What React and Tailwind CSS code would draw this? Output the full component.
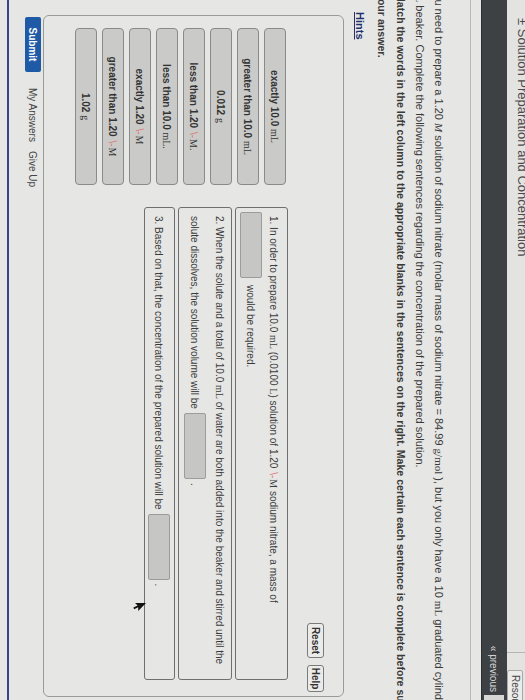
import React from 'react';

// The reference is a photo of a landscape page stored sideways,
// so the page is laid out at 700x525 and turned 90deg clockwise.

const Serif = ({ children, italic }) => (
  <span className={`font-['Liberation_Serif',serif] font-normal ${italic ? 'italic' : ''}`}>{children}</span>
);

const Glitch = () => (
  <span className="font-normal text-[#e07070] mx-[1px]">\-</span>
);

const TILES = [
  <>exactly 10.0 <Serif>mL</Serif></>,
  <>greater than 10.0 <Serif>mL</Serif></>,
  <>0.012 <Serif>g</Serif></>,
  <>less than 1.20 <Glitch /><Serif>M.</Serif></>,
  <>less than 10.0 <Serif>mL.</Serif></>,
  <>exactly 1.20 <Glitch /><Serif>M</Serif></>,
  <>greater than 1.20 <Glitch /><Serif>M</Serif></>,
  <>1.02 <Serif>g</Serif></>,
];

function DropBox() {
  return (
    <span className="inline-block align-middle w-[66px] h-[22px] bg-[#c6c6c4] border border-[#9c9c9c] rounded-[2px]" />
  );
}

function Tile({ children }) {
  return (
    <div className="h-[22px] flex items-center justify-center bg-[#cacac8] border border-[#8a8a8a] rounded-[4px] text-[10px] font-bold text-[#333] whitespace-nowrap">
      <span>{children}</span>
    </div>
  );
}

export default function App() {
  return (
    <div className="relative w-[525px] h-[700px] overflow-hidden bg-[#e5e5e3]">
      <div className="absolute left-0 top-0 w-[700px] h-[525px] origin-top-left rotate-90 translate-x-[525px] flex flex-col overflow-hidden bg-[#e6e6e4] text-[#3a3a3a] font-['Liberation_Sans',Arial,sans-serif]">
        {/* title strip */}
        <div className="h-[18px] shrink-0 flex items-start bg-[#e3e3e1]">
          <div className="ml-[18px] mt-[-4px] text-[13px] leading-[13px] text-[#4a4a4a] whitespace-nowrap">
            ± Solution Preparation and Concentration
          </div>
          <div className="ml-auto h-full w-[48px] border-l border-[#b5b5b5] flex items-start pl-[17px]">
            <div className="mt-[2px] h-[16px] px-[4px] border border-[#a8a8a8] rounded-[2px] bg-[#ececea] text-[10px] leading-[14px] text-[#444]">
              Resources
            </div>
          </div>
        </div>

        {/* dark nav band */}
        <div className="h-[26px] shrink-0 flex items-end justify-end bg-[#3e4144] border-b border-[#2c2e30]">
          <span className="mb-[4px] text-[10px] text-[#d8d8d8] whitespace-nowrap">« previous</span>
          <div className="ml-[3px] w-[5px] h-[20px] mb-[2px] bg-[#d6d6d4]" />
        </div>

        <div className="h-[11px] shrink-0 border-b border-[#b9b9b7]" />

        {/* problem text */}
        <div className="mt-[22px] ml-[-13px] text-[11px] leading-[19px] whitespace-nowrap text-[#3a3a3a]">
          <div>
            You need to prepare a 1.20 <Serif italic>M</Serif> solution of sodium nitrate (molar mass of sodium nitrate = 84.99{' '}
            <Serif>g/mol</Serif> ), but you only have a 10 <Serif>mL</Serif> graduated cylinder and a 10
          </div>
          <div>
            <Serif>mL</Serif> beaker. Complete the following sentences regarding the concentration of the prepared solution.
          </div>
          <div className="ml-[6px] font-bold text-[10.6px]">
            Match the words in the left column to the appropriate blanks in the sentences on the right. Make certain each sentence is complete before submitting
          </div>
          <div className="ml-[6px] font-bold text-[10.6px]">your answer.</div>
        </div>

        <div className="mt-[5px] ml-[12px] text-[11px] leading-[14px] font-bold underline text-[#22306e]">Hints</div>

        {/* answer panel */}
        <div className="mt-[9px] ml-[15px] w-[682px] h-[301px] shrink-0 border border-[#9a9a98] rounded-[6px] flex flex-col pt-[19px]">
          <div className="flex justify-end gap-[7px] pr-[4px]">
            <button className="w-[35px] h-[17px] border border-[#7a7a7a] rounded-[3px] bg-[#ebebe9] text-[10px] font-bold text-[#333]">Reset</button>
            <button className="w-[27px] h-[17px] border border-[#7a7a7a] rounded-[3px] bg-[#ebebe9] text-[10px] font-bold text-[#333]">Help</button>
          </div>

          <div className="mt-[19px] flex items-start">
            <div className="ml-[12px] mt-[2px] w-[157px] flex flex-col gap-[5px]">
              {TILES.map((t, i) => (
                <Tile key={i}>{t}</Tile>
              ))}
            </div>

            <div className="relative ml-[22px] w-[473px] flex flex-col gap-[3px] text-[10px] text-[#3a3a3a]">
              <div className="border border-[#6f6f6f] rounded-[3px] pt-[6px] pb-[4px] px-[8px] whitespace-nowrap">
                <div className="leading-[16px]">
                  1. In order to prepare 10.0 <Serif>mL</Serif> (0.0100 <Serif>L</Serif>) solution of 1.20 <Glitch />
                  <Serif>M</Serif> sodium nitrate, a mass of
                </div>
                <div className="mt-[3px] ml-[-4px] flex items-center gap-[7px]">
                  <DropBox />
                  <span>would be required.</span>
                </div>
              </div>

              <div className="border border-[#6f6f6f] rounded-[3px] pt-[4px] pb-[5px] px-[8px] whitespace-nowrap">
                <div className="leading-[16px]">
                  2. When the solute and a total of 10.0 <Serif>mL</Serif> of water are both added into the beaker and stirred until the
                </div>
                <div className="mt-[5px] flex items-center gap-[4px]">
                  <span>solute dissolves, the solution volume will be</span>
                  <DropBox />
                  <span>.</span>
                </div>
              </div>

              <div className="border border-[#6f6f6f] rounded-[3px] pt-[4px] pb-[3px] px-[8px] whitespace-nowrap flex items-center gap-[4px]">
                <span>3. Based on that, the concentration of the prepared solution will be</span>
                <DropBox />
                <span>.</span>
              </div>

              {/* mouse pointer */}
              <svg className="absolute left-[396px] top-[142px]" width="9" height="13" viewBox="0 0 9 13">
                <path d="M0 0 L0 11 L2.6 8.4 L4.6 12.6 L6.2 11.9 L4.3 7.8 L8 7.8 Z" fill="#111" />
              </svg>
            </div>
          </div>
        </div>

        {/* submit row */}
        <div className="mt-[2px] ml-[17px] flex items-center h-[16px] shrink-0">
          <button className="w-[55px] h-[16px] bg-[#1e5aa5] rounded-[2px] text-white text-[10px] font-bold">Submit</button>
          <span className="ml-[16px] text-[10px] text-[#444]">My Answers</span>
          <span className="ml-[9px] text-[10px] text-[#444]">Give Up</span>
        </div>

        <div className="mt-[16px] h-[2px] shrink-0 bg-[#34468a]" />
      </div>
    </div>
  );
}
